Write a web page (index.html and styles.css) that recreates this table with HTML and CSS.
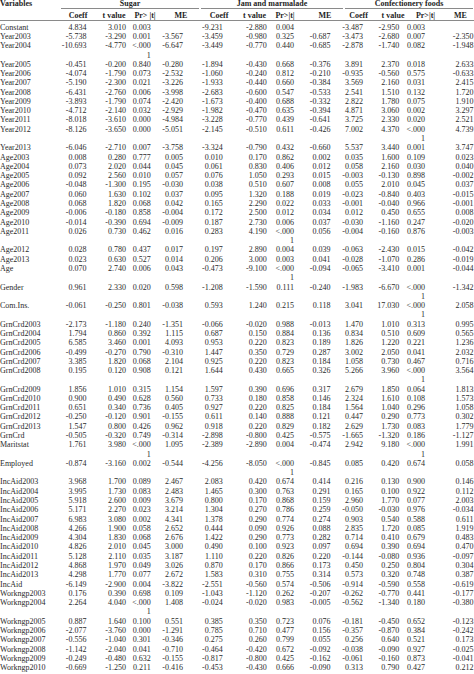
FILE: index.html
```html
<!DOCTYPE html>
<html>
<head>
<meta charset="utf-8">
<link rel="stylesheet" href="styles.css">
</head>
<body>
<div class="tbl">
  <div class="grp">
    <span class="var">Variables</span>
    <span class="g">Sugar</span>
    <span class="g">Jam and marmalade</span>
    <span class="g">Confectionery foods</span>
  </div>
  <div class="sub">
    <span>Coeff</span><span>t value</span><span>Pr&gt; |t|</span><span>ME</span>
    <span>Coeff</span><span>t value</span><span>Pr&gt;|t|</span><span>ME</span>
    <span>Coeff</span><span>t value</span><span>Pr&gt;|t|</span><span>ME</span>
  </div>
  <div class="body">
    <div class="r"><span>Constant</span><span>4.834</span><span>3.010</span><span>0.003</span><span></span><span>-9.231</span><span>-2.880</span><span>0.004</span><span></span><span>-3.487</span><span>-2.950</span><span>0.003</span><span></span></div>
    <div class="r"><span>Year2003</span><span>-5.738</span><span>-3.290</span><span>0.001</span><span>-3.567</span><span>-3.459</span><span>-0.980</span><span>0.325</span><span>-0.687</span><span>-3.473</span><span>-2.680</span><span>0.007</span><span>-2.350</span></div>
    <div class="r"><span>Year2004</span><span>-10.693</span><span>-4.770</span><span>&lt;.000<br>1</span><span>-6.647</span><span>-3.449</span><span>-0.770</span><span>0.440</span><span>-0.685</span><span>-2.878</span><span>-1.740</span><span>0.082</span><span>-1.948</span></div>
    <div class="r"><span>Year2005</span><span>-0.451</span><span>-0.200</span><span>0.840</span><span>-0.280</span><span>-1.894</span><span>-0.430</span><span>0.668</span><span>-0.376</span><span>3.891</span><span>2.370</span><span>0.018</span><span>2.633</span></div>
    <div class="r"><span>Year2006</span><span>-4.074</span><span>-1.790</span><span>0.073</span><span>-2.532</span><span>-1.060</span><span>-0.240</span><span>0.812</span><span>-0.210</span><span>-0.935</span><span>-0.560</span><span>0.575</span><span>-0.633</span></div>
    <div class="r"><span>Year2007</span><span>-5.190</span><span>-2.300</span><span>0.021</span><span>-3.226</span><span>-1.933</span><span>-0.440</span><span>0.660</span><span>-0.384</span><span>3.569</span><span>2.160</span><span>0.031</span><span>2.415</span></div>
    <div class="r"><span>Year2008</span><span>-6.431</span><span>-2.760</span><span>0.006</span><span>-3.998</span><span>-2.683</span><span>-0.600</span><span>0.547</span><span>-0.533</span><span>2.541</span><span>1.510</span><span>0.132</span><span>1.720</span></div>
    <div class="r"><span>Year2009</span><span>-3.893</span><span>-1.790</span><span>0.074</span><span>-2.420</span><span>-1.673</span><span>-0.400</span><span>0.688</span><span>-0.332</span><span>2.822</span><span>1.780</span><span>0.075</span><span>1.910</span></div>
    <div class="r"><span>Year2010</span><span>-4.712</span><span>-2.140</span><span>0.032</span><span>-2.929</span><span>-1.982</span><span>-0.470</span><span>0.635</span><span>-0.394</span><span>4.871</span><span>3.060</span><span>0.002</span><span>3.297</span></div>
    <div class="r"><span>Year2011</span><span>-8.018</span><span>-3.610</span><span>0.000</span><span>-4.984</span><span>-3.228</span><span>-0.770</span><span>0.439</span><span>-0.641</span><span>3.725</span><span>2.330</span><span>0.020</span><span>2.521</span></div>
    <div class="r"><span>Year2012</span><span>-8.126</span><span>-3.650</span><span>0.000</span><span>-5.051</span><span>-2.145</span><span>-0.510</span><span>0.611</span><span>-0.426</span><span>7.002</span><span>4.370</span><span>&lt;.000<br>1</span><span>4.739</span></div>
    <div class="r"><span>Year2013</span><span>-6.046</span><span>-2.710</span><span>0.007</span><span>-3.758</span><span>-3.324</span><span>-0.790</span><span>0.432</span><span>-0.660</span><span>5.537</span><span>3.440</span><span>0.001</span><span>3.747</span></div>
    <div class="r"><span>Age2003</span><span>0.008</span><span>0.280</span><span>0.777</span><span>0.005</span><span>0.010</span><span>0.170</span><span>0.862</span><span>0.002</span><span>0.035</span><span>1.600</span><span>0.109</span><span>0.023</span></div>
    <div class="r"><span>Age2004</span><span>0.073</span><span>2.020</span><span>0.044</span><span>0.045</span><span>0.061</span><span>0.830</span><span>0.406</span><span>0.012</span><span>0.058</span><span>2.160</span><span>0.030</span><span>0.040</span></div>
    <div class="r"><span>Age2005</span><span>0.092</span><span>2.560</span><span>0.010</span><span>0.057</span><span>0.076</span><span>1.050</span><span>0.293</span><span>0.015</span><span>-0.003</span><span>-0.130</span><span>0.898</span><span>-0.002</span></div>
    <div class="r"><span>Age2006</span><span>-0.048</span><span>-1.300</span><span>0.195</span><span>-0.030</span><span>0.038</span><span>0.510</span><span>0.607</span><span>0.008</span><span>0.055</span><span>2.010</span><span>0.045</span><span>0.037</span></div>
    <div class="r"><span>Age2007</span><span>0.060</span><span>1.630</span><span>0.102</span><span>0.037</span><span>0.095</span><span>1.320</span><span>0.188</span><span>0.019</span><span>-0.023</span><span>-0.840</span><span>0.403</span><span>-0.015</span></div>
    <div class="r"><span>Age2008</span><span>0.068</span><span>1.820</span><span>0.068</span><span>0.042</span><span>0.165</span><span>2.290</span><span>0.022</span><span>0.033</span><span>-0.001</span><span>-0.040</span><span>0.966</span><span>-0.001</span></div>
    <div class="r"><span>Age2009</span><span>-0.006</span><span>-0.180</span><span>0.858</span><span>-0.004</span><span>0.172</span><span>2.500</span><span>0.012</span><span>0.034</span><span>0.012</span><span>0.450</span><span>0.655</span><span>0.008</span></div>
    <div class="r"><span>Age2010</span><span>-0.014</span><span>-0.390</span><span>0.694</span><span>-0.009</span><span>0.187</span><span>2.730</span><span>0.006</span><span>0.037</span><span>-0.030</span><span>-1.160</span><span>0.247</span><span>-0.020</span></div>
    <div class="r"><span>Age2011</span><span>0.026</span><span>0.730</span><span>0.462</span><span>0.016</span><span>0.283</span><span>4.190</span><span>&lt;.000<br>1</span><span>0.056</span><span>-0.004</span><span>-0.160</span><span>0.876</span><span>-0.003</span></div>
    <div class="r"><span>Age2012</span><span>0.028</span><span>0.780</span><span>0.437</span><span>0.017</span><span>0.197</span><span>2.890</span><span>0.004</span><span>0.039</span><span>-0.063</span><span>-2.430</span><span>0.015</span><span>-0.042</span></div>
    <div class="r"><span>Age2013</span><span>0.023</span><span>0.630</span><span>0.527</span><span>0.014</span><span>0.206</span><span>3.000</span><span>0.003</span><span>0.041</span><span>-0.028</span><span>-1.070</span><span>0.286</span><span>-0.019</span></div>
    <div class="r"><span>Age</span><span>0.070</span><span>2.740</span><span>0.006</span><span>0.043</span><span>-0.473</span><span>-9.100</span><span>&lt;.000<br>1</span><span>-0.094</span><span>-0.065</span><span>-3.410</span><span>0.001</span><span>-0.044</span></div>
    <div class="r"><span>Gender</span><span>0.961</span><span>2.330</span><span>0.020</span><span>0.598</span><span>-1.208</span><span>-1.590</span><span>0.111</span><span>-0.240</span><span>-1.983</span><span>-6.670</span><span>&lt;.000<br>1</span><span>-1.342</span></div>
    <div class="r"><span>Com.Ins.</span><span>-0.061</span><span>-0.250</span><span>0.801</span><span>-0.038</span><span>0.593</span><span>1.240</span><span>0.215</span><span>0.118</span><span>3.041</span><span>17.030</span><span>&lt;.000<br>1</span><span>2.058</span></div>
    <div class="r"><span>GrnCrd2003</span><span>-2.173</span><span>-1.180</span><span>0.240</span><span>-1.351</span><span>-0.066</span><span>-0.020</span><span>0.988</span><span>-0.013</span><span>1.470</span><span>1.010</span><span>0.313</span><span>0.995</span></div>
    <div class="r"><span>GrnCrd2004</span><span>1.794</span><span>0.860</span><span>0.392</span><span>1.115</span><span>0.687</span><span>0.150</span><span>0.884</span><span>0.136</span><span>0.834</span><span>0.510</span><span>0.609</span><span>0.565</span></div>
    <div class="r"><span>GrnCrd2005</span><span>6.585</span><span>3.460</span><span>0.001</span><span>4.093</span><span>0.953</span><span>0.220</span><span>0.823</span><span>0.189</span><span>1.826</span><span>1.220</span><span>0.221</span><span>1.236</span></div>
    <div class="r"><span>GrnCrd2006</span><span>-0.499</span><span>-0.270</span><span>0.790</span><span>-0.310</span><span>1.447</span><span>0.350</span><span>0.729</span><span>0.287</span><span>3.002</span><span>2.050</span><span>0.041</span><span>2.032</span></div>
    <div class="r"><span>GrnCrd2007</span><span>3.385</span><span>1.820</span><span>0.068</span><span>2.104</span><span>0.925</span><span>0.220</span><span>0.823</span><span>0.184</span><span>1.058</span><span>0.730</span><span>0.467</span><span>0.716</span></div>
    <div class="r"><span>GrnCrd2008</span><span>0.195</span><span>0.120</span><span>0.908</span><span>0.121</span><span>1.644</span><span>0.430</span><span>0.665</span><span>0.326</span><span>5.266</span><span>3.960</span><span>&lt;.000<br>1</span><span>3.564</span></div>
    <div class="r"><span>GrnCrd2009</span><span>1.856</span><span>1.010</span><span>0.315</span><span>1.154</span><span>1.597</span><span>0.390</span><span>0.696</span><span>0.317</span><span>2.679</span><span>1.850</span><span>0.064</span><span>1.813</span></div>
    <div class="r"><span>GrnCrd2010</span><span>0.900</span><span>0.490</span><span>0.628</span><span>0.560</span><span>0.733</span><span>0.180</span><span>0.858</span><span>0.146</span><span>2.324</span><span>1.610</span><span>0.108</span><span>1.573</span></div>
    <div class="r"><span>GrnCrd2011</span><span>0.651</span><span>0.340</span><span>0.736</span><span>0.405</span><span>0.927</span><span>0.220</span><span>0.825</span><span>0.184</span><span>1.564</span><span>1.040</span><span>0.296</span><span>1.058</span></div>
    <div class="r"><span>GrnCrd2012</span><span>-0.250</span><span>-0.120</span><span>0.901</span><span>-0.155</span><span>0.611</span><span>0.140</span><span>0.888</span><span>0.121</span><span>0.447</span><span>0.290</span><span>0.773</span><span>0.302</span></div>
    <div class="r"><span>GrnCrd2013</span><span>1.547</span><span>0.800</span><span>0.426</span><span>0.962</span><span>0.918</span><span>0.220</span><span>0.829</span><span>0.182</span><span>2.629</span><span>1.730</span><span>0.083</span><span>1.779</span></div>
    <div class="r"><span>GrnCrd</span><span>-0.505</span><span>-0.320</span><span>0.749</span><span>-0.314</span><span>-2.898</span><span>-0.800</span><span>0.425</span><span>-0.575</span><span>-1.665</span><span>-1.320</span><span>0.186</span><span>-1.127</span></div>
    <div class="r"><span>Maritstat</span><span>1.761</span><span>3.980</span><span>&lt;.000<br>1</span><span>1.095</span><span>-2.389</span><span>-2.890</span><span>0.004</span><span>-0.474</span><span>2.942</span><span>9.180</span><span>&lt;.000<br>1</span><span>1.991</span></div>
    <div class="r"><span>Employed</span><span>-0.874</span><span>-3.160</span><span>0.002</span><span>-0.544</span><span>-4.256</span><span>-8.050</span><span>&lt;.000<br>1</span><span>-0.845</span><span>0.085</span><span>0.420</span><span>0.674</span><span>0.058</span></div>
    <div class="r"><span>IncAid2003</span><span>3.968</span><span>1.700</span><span>0.089</span><span>2.467</span><span>2.083</span><span>0.420</span><span>0.674</span><span>0.414</span><span>0.216</span><span>0.130</span><span>0.900</span><span>0.146</span></div>
    <div class="r"><span>IncAid2004</span><span>3.995</span><span>1.730</span><span>0.083</span><span>2.483</span><span>1.465</span><span>0.300</span><span>0.763</span><span>0.291</span><span>0.165</span><span>0.100</span><span>0.922</span><span>0.112</span></div>
    <div class="r"><span>IncAid2005</span><span>5.918</span><span>2.600</span><span>0.009</span><span>3.679</span><span>0.800</span><span>0.170</span><span>0.868</span><span>0.159</span><span>2.960</span><span>1.770</span><span>0.077</span><span>2.003</span></div>
    <div class="r"><span>IncAid2006</span><span>5.171</span><span>2.270</span><span>0.023</span><span>3.214</span><span>1.304</span><span>0.270</span><span>0.786</span><span>0.259</span><span>-0.050</span><span>-0.030</span><span>0.976</span><span>-0.034</span></div>
    <div class="r"><span>IncAid2007</span><span>6.983</span><span>3.080</span><span>0.002</span><span>4.341</span><span>1.378</span><span>0.290</span><span>0.774</span><span>0.274</span><span>0.903</span><span>0.540</span><span>0.588</span><span>0.611</span></div>
    <div class="r"><span>IncAid2008</span><span>4.266</span><span>1.900</span><span>0.058</span><span>2.652</span><span>0.444</span><span>0.090</span><span>0.926</span><span>0.088</span><span>2.835</span><span>1.720</span><span>0.085</span><span>1.919</span></div>
    <div class="r"><span>IncAid2009</span><span>4.304</span><span>1.830</span><span>0.068</span><span>2.676</span><span>1.422</span><span>0.290</span><span>0.773</span><span>0.282</span><span>0.714</span><span>0.410</span><span>0.679</span><span>0.483</span></div>
    <div class="r"><span>IncAid2010</span><span>4.826</span><span>2.010</span><span>0.045</span><span>3.000</span><span>0.490</span><span>0.100</span><span>0.923</span><span>0.097</span><span>0.694</span><span>0.390</span><span>0.694</span><span>0.470</span></div>
    <div class="r"><span>IncAid2011</span><span>5.128</span><span>2.110</span><span>0.035</span><span>3.187</span><span>1.110</span><span>0.220</span><span>0.826</span><span>0.220</span><span>-0.144</span><span>-0.080</span><span>0.936</span><span>-0.097</span></div>
    <div class="r"><span>IncAid2012</span><span>4.868</span><span>1.970</span><span>0.049</span><span>3.026</span><span>0.870</span><span>0.170</span><span>0.866</span><span>0.173</span><span>0.450</span><span>0.250</span><span>0.804</span><span>0.304</span></div>
    <div class="r"><span>IncAid2013</span><span>4.298</span><span>1.770</span><span>0.077</span><span>2.672</span><span>1.583</span><span>0.310</span><span>0.755</span><span>0.314</span><span>0.573</span><span>0.320</span><span>0.748</span><span>0.387</span></div>
    <div class="r"><span>IncAid</span><span>-6.149</span><span>-2.900</span><span>0.004</span><span>-3.822</span><span>-2.551</span><span>-0.560</span><span>0.574</span><span>-0.506</span><span>-0.914</span><span>-0.590</span><span>0.558</span><span>-0.619</span></div>
    <div class="r"><span>Workngp2003</span><span>0.176</span><span>0.390</span><span>0.698</span><span>0.109</span><span>-1.043</span><span>-1.120</span><span>0.262</span><span>-0.207</span><span>-0.262</span><span>-0.770</span><span>0.441</span><span>-0.177</span></div>
    <div class="r"><span>Workngp2004</span><span>2.264</span><span>4.040</span><span>&lt;.000<br>1</span><span>1.408</span><span>-0.024</span><span>-0.020</span><span>0.983</span><span>-0.005</span><span>-0.562</span><span>-1.340</span><span>0.180</span><span>-0.380</span></div>
    <div class="r"><span>Workngp2005</span><span>0.887</span><span>1.640</span><span>0.100</span><span>0.551</span><span>0.385</span><span>0.350</span><span>0.723</span><span>0.076</span><span>-0.181</span><span>-0.450</span><span>0.652</span><span>-0.123</span></div>
    <div class="r"><span>Workngp2006</span><span>-2.077</span><span>-3.760</span><span>0.000</span><span>-1.291</span><span>0.785</span><span>0.710</span><span>0.477</span><span>0.156</span><span>-0.357</span><span>-0.870</span><span>0.384</span><span>-0.242</span></div>
    <div class="r"><span>Workngp2007</span><span>-0.556</span><span>-1.040</span><span>0.301</span><span>-0.346</span><span>0.275</span><span>0.260</span><span>0.799</span><span>0.055</span><span>0.256</span><span>0.640</span><span>0.521</span><span>0.173</span></div>
    <div class="r"><span>Workngp2008</span><span>-1.142</span><span>-2.040</span><span>0.041</span><span>-0.710</span><span>-0.464</span><span>-0.420</span><span>0.672</span><span>-0.092</span><span>-0.038</span><span>-0.090</span><span>0.927</span><span>-0.025</span></div>
    <div class="r"><span>Workngp2009</span><span>-0.249</span><span>-0.480</span><span>0.632</span><span>-0.155</span><span>-0.817</span><span>-0.800</span><span>0.425</span><span>-0.162</span><span>-0.061</span><span>-0.160</span><span>0.873</span><span>-0.041</span></div>
    <div class="r"><span>Workngp2010</span><span>-0.669</span><span>-1.250</span><span>0.211</span><span>-0.416</span><span>-0.453</span><span>-0.430</span><span>0.666</span><span>-0.090</span><span>0.313</span><span>0.790</span><span>0.427</span><span>0.212</span></div>
  </div>
</div>
</body>
</html>
```

FILE: styles.css
```css
html, body {
  margin: 0;
  padding: 0;
  background: #ffffff;
}

body {
  width: 474px;
  height: 674px;
  overflow: hidden;
  font-family: "Liberation Serif", "Times New Roman", serif;
  font-size: 8px;
  color: #2b2b2b;
}

.tbl {
  width: 474px;
}

.grp {
  display: grid;
  grid-template-columns: 60px 140px 144px 130px;
  height: 9px;
  font-weight: bold;
  line-height: 8px;
  color: #1e1e1e;
}

.grp .var {
  text-align: left;
}

.grp .g {
  text-align: center;
  height: 8px;
  border-bottom: 1px solid #8a8a8a;
  margin: 0 1px;
}

.sub {
  display: flex;
  padding-top: 2px;
  height: 9.28px;
  line-height: 9.28px;
  border-bottom: 1px solid #8a8a8a;
  font-weight: bold;
  color: #1e1e1e;
  white-space: nowrap;
}

.sub span {
  width: 30px;
  flex: none;
  text-align: center;
}

.sub span:nth-child(1) { margin-left: 63px; }
.sub span:nth-child(2) { margin-left: 6px; }
.sub span:nth-child(3) { margin-left: 1px; }
.sub span:nth-child(4) { margin-left: 6px; }
.sub span:nth-child(5) { margin-left: 8px; }
.sub span:nth-child(6) { margin-left: 5.5px; }
.sub span:nth-child(7) { margin-left: 0.5px; }
.sub span:nth-child(8) { margin-left: 10px; }
.sub span:nth-child(9) { margin-left: 3.5px; }
.sub span:nth-child(10) { margin-left: 4.5px; }
.sub span:nth-child(11) { margin-left: 2.5px; }
.sub span:nth-child(12) { margin-left: 5px; }

.body {
  padding-top: 1.4px;
}

.r {
  display: grid;
  grid-template-columns: 58px 28.5px 39.5px 24.7px 32.3px 39.7px 44px 27.3px 36.5px 32.5px 36.2px 25.8px 48.5px;
  line-height: 9.28px;
  white-space: nowrap;
}

.r span {
  text-align: right;
}

.r span:first-child {
  text-align: left;
}
```
